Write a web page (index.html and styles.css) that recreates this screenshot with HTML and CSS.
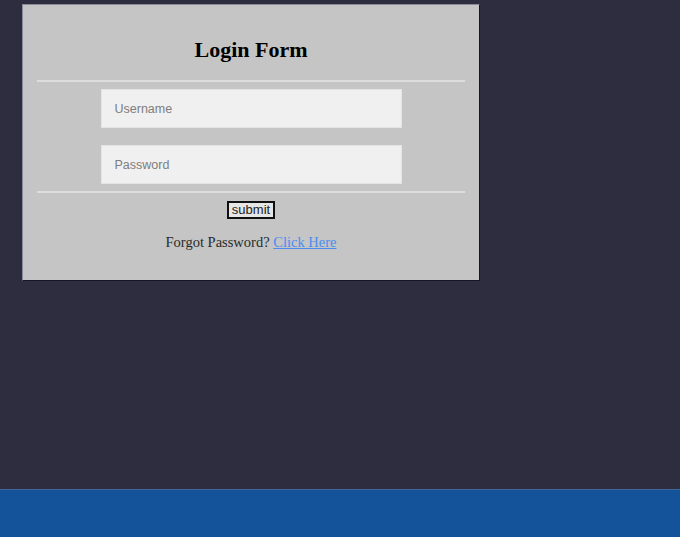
FILE: index.html
```html
<!DOCTYPE html>
<html>
<head>
<meta charset="utf-8">
<link rel="stylesheet" href="styles.css">
</head>
<body>
<div class="page">
  <main class="main">
    <form class="card">
      <h2 class="title">Login Form</h2>
      <hr class="rule">
      <div class="fields">
        <input class="field" type="text" placeholder="Username">
        <input class="field" type="password" placeholder="Password">
      </div>
      <hr class="rule rule-bottom">
      <div class="actions">
        <button class="submit" type="button">submit</button>
      </div>
      <p class="forgot">Forgot Password? <a href="#" class="link">Click Here</a></p>
    </form>
  </main>
  <footer class="footer"></footer>
</div>
</body>
</html>
```
FILE: styles.css
```css
html, body {
  margin: 0;
  padding: 0;
  height: 100%;
}
body {
  background: #2e2d40;
  font-family: "Liberation Serif", "Times New Roman", serif;
}
.page {
  display: flex;
  flex-direction: column;
  height: 537px;
}
.main {
  flex: 1;
  padding: 4px 0 0 22px;
}
.card {
  width: 428px;
  height: 275px;
  padding: 0 14px;
  margin: 0;
  background: #c4c5c4;
  border: 1px solid #15142a;
  border-top-color: #8a8a96;
  border-left-color: #8a8a96;
  display: flex;
  flex-direction: column;
}
.title {
  margin: 32px 0 18px;
  font-size: 22px;
  line-height: 25px;
  font-weight: bold;
  text-align: center;
  color: #000;
}
.rule {
  margin: 0;
  height: 0;
  border: none;
  border-top: 2px solid #dcdddc;
}
.fields {
  display: flex;
  flex-direction: column;
  align-items: center;
  gap: 17px;
  padding: 7px 0 7px;
}
.field {
  width: 301px;
  height: 39px;
  box-sizing: border-box;
  border: 1px solid #e4e4e4;
  background: #f0f0f0;
  padding: 0 13px;
  font-family: "Liberation Sans", Arial, sans-serif;
  font-size: 12.5px;
  color: #333;
  outline: none;
}
.field::placeholder {
  color: #7e7e7e;
}
.actions {
  display: flex;
  justify-content: center;
  padding-top: 8px;
}
.submit {
  margin: 0;
  height: 18px;
  padding: 0 3px;
  border: 2px solid #111;
  background: #e6e6e6;
  font-family: "Liberation Sans", Arial, sans-serif;
  font-size: 13px;
  line-height: 14px;
  color: #222;
}
.forgot {
  margin: 15px 0 0;
  text-align: center;
  font-size: 14.5px;
  line-height: 17px;
  color: #2a2a2a;
}
.link {
  color: #4a8cf0;
  text-decoration: underline;
}
.footer {
  height: 47px;
  background: #14539a;
  border-top: 1px solid #3f679a;
}
```
